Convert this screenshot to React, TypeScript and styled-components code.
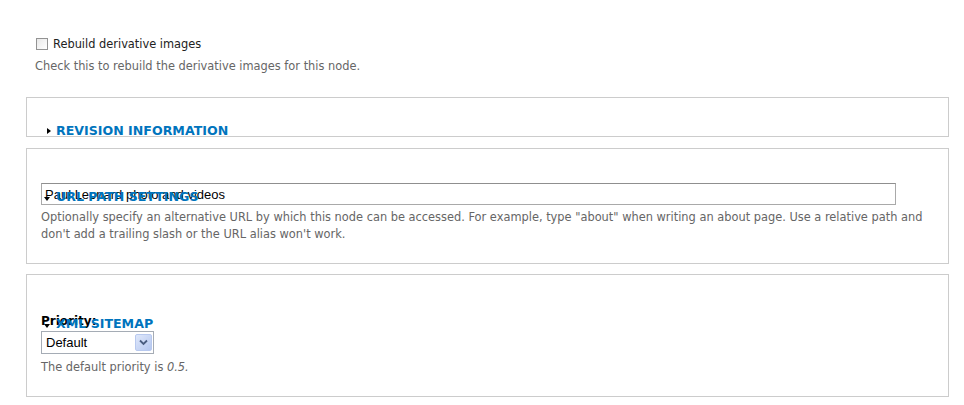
import styled, { createGlobalStyle } from 'styled-components';

const GlobalStyle = createGlobalStyle`
  html, body {
    margin: 0;
    padding: 0;
    background: #fff;
  }
  body {
    font-family: "DejaVu Sans", Verdana, sans-serif;
    color: #333;
  }
`;

function App() {
    return (
        <>
            <GlobalStyle/>
            <Page>
                <FormItem>
                    <CheckRow>
                        <CheckBox/>
                        <CheckLabel>Rebuild derivative images</CheckLabel>
                    </CheckRow>
                    <Description>Check this to rebuild the derivative images for this node.</Description>
                </FormItem>

                <Fieldset $collapsed>
                    <Legend $top={26} $collapsed>
                        <Arrow $collapsed/>
                        REVISION INFORMATION
                    </Legend>
                </Fieldset>

                <Fieldset $padTop={34} $mb={10}>
                    <Legend $top={41}>
                        <Arrow/>
                        URL PATH SETTINGS
                    </Legend>
                    <TextInput defaultValue={"Paul Leonard photo and videos"}/>
                    <Description $mt={4}>
                        Optionally specify an alternative URL by which this node can be accessed. For example, type "about" when writing an about page. Use a relative path and don't add a trailing slash or the URL alias won't work.
                    </Description>
                </Fieldset>

                <Fieldset $padTop={39}>
                    <Legend $top={42}>
                        <Arrow/>
                        XML SITEMAP
                    </Legend>
                    <FieldLabel>Priority:</FieldLabel>
                    <SelectBox>
                        <span>Default</span>
                        <SelectButton>
                            <svg width="9" height="7" viewBox="0 0 9 7">
                                <path d="M1 1.5 L4.5 5 L8 1.5" fill="none" stroke="#4a5d80" strokeWidth="1.8"/>
                            </svg>
                        </SelectButton>
                    </SelectBox>
                    <Description $mt={5}>
                        The default priority is <em>0.5.</em>
                    </Description>
                </Fieldset>
            </Page>
        </>
    );
}

export default App;

const Page = styled.div`
  padding: 37px 15px 8px 26px;
`;

const FormItem = styled.div`
  padding-left: 9px;
  margin-bottom: 22px;
`;

const CheckRow = styled.div`
  display: flex;
  align-items: center;
  gap: 5px;
  height: 14px;
`;

const CheckBox = styled.span`
  display: inline-block;
  box-sizing: border-box;
  width: 12px;
  height: 12px;
  border: 1px solid #939393;
  background: linear-gradient(135deg, #e8e8e8, #fff);
  margin-left: 1px;
`;

const CheckLabel = styled.label`
  font-size: 11.4px;
  color: #222;
  line-height: 14px;
`;

const Description = styled.div<{ $mt?: number }>`
  margin-top: ${(p) => p.$mt ?? 7}px;
  font-size: 11.4px;
  line-height: 17px;
  color: #666;
  em {
    font-style: italic;
  }
`;

const Fieldset = styled.div<{ $collapsed?: boolean; $padTop?: number; $mb?: number }>`
  position: relative;
  box-sizing: border-box;
  border: 1px solid #ccc;
  margin-bottom: ${(p) => p.$mb ?? 11}px;
  height: ${(p) => (p.$collapsed ? '40px' : 'auto')};
  padding: ${(p) => (p.$collapsed ? 0 : `${p.$padTop ?? 34}px 12px 20px 14px`)};
`;

const Legend = styled.div<{ $top: number; $collapsed?: boolean }>`
  position: absolute;
  top: ${(p) => p.$top}px;
  left: ${(p) => (p.$collapsed ? 20 : 17)}px;
  display: flex;
  align-items: center;
  gap: ${(p) => (p.$collapsed ? 5 : 6)}px;
  font-size: 12.6px;
  font-weight: bold;
  line-height: 14px;
  color: #0074bd;
  text-transform: uppercase;
`;

const Arrow = styled.span<{ $collapsed?: boolean }>`
  display: inline-block;
  width: 0;
  height: 0;
  ${(p) =>
    p.$collapsed
        ? `border-top: 3.5px solid transparent;
           border-bottom: 3.5px solid transparent;
           border-left: 4px solid #000;`
        : `border-left: 3.5px solid transparent;
           border-right: 3.5px solid transparent;
           border-top: 4px solid #000;
           margin-top: 3px;`}
`;

const TextInput = styled.input`
  display: block;
  box-sizing: border-box;
  width: 855px;
  height: 22px;
  margin: 0;
  padding: 0 3px;
  border: 1px solid #a9a9a9;
  border-top-color: #8f8f8f;
  font-family: "Liberation Sans", Arial, sans-serif;
  font-size: 13px;
  color: #000;
  background: #fff;
`;

const FieldLabel = styled.label`
  display: block;
  font-size: 12px;
  font-weight: bold;
  line-height: 14px;
  color: #000;
  margin-bottom: 3px;
`;

const SelectBox = styled.div`
  box-sizing: border-box;
  width: 113px;
  height: 23px;
  border: 1px solid #a5acb5;
  display: flex;
  align-items: center;
  justify-content: space-between;
  padding: 0 1px 0 4px;
  font-family: "Liberation Sans", Arial, sans-serif;
  font-size: 13px;
  color: #000;
  background: #fff;
`;

const SelectButton = styled.span`
  box-sizing: border-box;
  width: 17px;
  height: 17px;
  display: flex;
  align-items: center;
  justify-content: center;
  border: 1px solid #b8c9ef;
  border-radius: 2px;
  background: linear-gradient(135deg, #dfe8fb, #b5c7ef);
`;
